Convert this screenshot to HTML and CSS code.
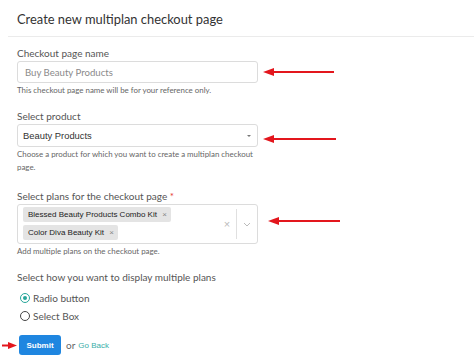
FILE: index.html
```html
<!DOCTYPE html>
<html lang="en">
<head>
<meta charset="utf-8">
<title>Create new multiplan checkout page</title>
<link rel="stylesheet" href="styles.css">
</head>
<body>
<div class="page">
  <h1 class="header">Create new multiplan checkout page</h1>
  <form class="form">
    <div class="group g1">
      <label class="label">Checkout page name</label>
      <div class="row">
        <div class="input"><span class="placeholder">Buy Beauty Products</span></div>
        <svg class="arrow a1" width="71" height="8" viewBox="0 0 71 8"><path d="M9 4H71" stroke="#e3161d" stroke-width="2"/><path d="M0 4L11 0V8Z" fill="#e3161d"/></svg>
      </div>
      <p class="help">This checkout page name will be for your reference only.</p>
    </div>

    <div class="group g2">
      <label class="label">Select product</label>
      <div class="row">
        <div class="select"><span class="select-text">Beauty Products</span><span class="caret"></span></div>
        <svg class="arrow a2" width="73" height="8" viewBox="0 0 73 8"><path d="M9 4H73" stroke="#e3161d" stroke-width="2"/><path d="M0 4L11 0V8Z" fill="#e3161d"/></svg>
      </div>
      <p class="help wrap">Choose a product for which you want to create a multiplan checkout page.</p>
    </div>

    <div class="group g3">
      <label class="label">Select plans for the checkout page <span class="req">*</span></label>
      <div class="row">
        <div class="multi">
          <div class="tags">
            <span class="tag">Blessed Beauty Products Combo Kit <span class="tag-x">×</span></span>
            <span class="tag">Color Diva Beauty Kit <span class="tag-x">×</span></span>
          </div>
          <div class="indicators">
            <span class="clear">×</span>
            <span class="sep"></span>
            <svg class="chev" width="8" height="5" viewBox="0 0 8 5"><path d="M1 1L4 4L7 1" fill="none" stroke="#bbb" stroke-width="1"/></svg>
          </div>
        </div>
        <svg class="arrow a3" width="72" height="8" viewBox="0 0 72 8"><path d="M9 4H72" stroke="#e3161d" stroke-width="2"/><path d="M0 4L11 0V8Z" fill="#e3161d"/></svg>
      </div>
      <p class="help">Add multiple plans on the checkout page.</p>
    </div>

    <div class="group g4">
      <label class="label">Select how you want to display multiple plans</label>
      <div class="radios">
        <div class="radio-row"><span class="radio checked"></span><span class="radio-label">Radio button</span></div>
        <div class="radio-row"><span class="radio"></span><span class="radio-label">Select Box</span></div>
      </div>
    </div>

    <div class="actions">
      <svg class="arrow a4" width="15" height="7" viewBox="0 0 15 7"><path d="M0 3.5H8" stroke="#e3161d" stroke-width="2"/><path d="M15 3.5L6 0V7Z" fill="#e3161d"/></svg>
      <button type="button" class="submit">Submit</button>
      <span class="or">or</span>
      <a class="back" href="#">Go Back</a>
    </div>
  </form>
</div>
</body>
</html>
```

FILE: styles.css
```css
html, body {
  margin: 0;
  padding: 0;
  background: #fff;
}
body {
  font-family: Lato, "Open Sans", sans-serif;
  color: #555;
}
.page {
  padding-left: 8px;
}
.header {
  margin: 0;
  padding: 10px 9px 8px;
  font-size: 12.9px;
  line-height: 18px;
  font-weight: 400;
  color: #333;
  border-bottom: 1px solid #ebebeb;
}
.form {
  padding: 10px 0 0 9px;
}
.group {
  display: flex;
  flex-direction: column;
}
.label {
  font-size: 10px;
  line-height: 13px;
  color: #555;
  margin-bottom: 1px;
}
.req {
  color: #e53935;
}
.row {
  display: flex;
  align-items: center;
}
.input, .select, .multi {
  box-sizing: border-box;
  width: 241px;
  border: 1px solid #dcdcdc;
  border-radius: 3px;
  background: #fff;
}
.input {
  height: 22px;
  display: flex;
  align-items: center;
  padding-left: 7px;
}
.placeholder {
  font-size: 9.6px;
  color: #8a8a8a;
}
.arrow {
  display: block;
  flex: none;
}
.a1 { margin-left: 5px; }
.a2 { margin-left: 5px; margin-top: 6px; }
.a3 { margin-left: 10px; margin-top: -7px; }
.help {
  margin: 2px 0 0;
  font-size: 7.9px;
  line-height: 11px;
  color: #666;
}
.help.wrap {
  width: 252px;
  line-height: 13px;
  margin-top: 1px;
}
.g2 { margin-top: 14px; }
.g3 { margin-top: 16px; }
.g4 { margin-top: 14px; }
.select {
  height: 23px;
  display: flex;
  align-items: center;
  justify-content: space-between;
  padding: 0 6px 0 5px;
}
.select-text {
  font-family: "Liberation Sans", Arial, sans-serif;
  font-size: 9.4px;
  color: #333;
}
.caret {
  width: 0;
  height: 0;
  border-left: 2.5px solid transparent;
  border-right: 2.5px solid transparent;
  border-top: 2.5px solid #777;
}
.multi {
  display: flex;
  align-items: stretch;
  min-height: 40px;
}
.tags {
  flex: 1;
  display: flex;
  flex-direction: column;
  align-items: flex-start;
  gap: 3px;
  padding: 2px 5px;
}
.tag {
  font-family: "Liberation Sans", Arial, sans-serif;
  font-size: 8px;
  line-height: 15px;
  color: #222;
  background: #e4e4e4;
  border-radius: 2px;
  padding: 0 4px 0 5px;
}
.tag-x {
  color: #888;
  font-size: 8px;
  margin-left: 3px;
}
.indicators {
  display: flex;
  align-items: center;
}
.clear {
  font-family: "Liberation Sans", Arial, sans-serif;
  color: #bbb;
  font-size: 11px;
  width: 18px;
  text-align: center;
}
.sep {
  width: 1px;
  align-self: stretch;
  margin: 4px 0;
  background: #e0e0e0;
}
.chev {
  display: block;
  margin: 0 6px 0 6px;
}
.radios {
  display: flex;
  flex-direction: column;
  padding-top: 4px;
}
.radio-row {
  display: flex;
  align-items: center;
  height: 18px;
  padding-left: 3px;
}
.radio {
  box-sizing: border-box;
  width: 10px;
  height: 10px;
  border: 1.5px solid #444;
  border-radius: 50%;
  margin-right: 3px;
  display: flex;
  align-items: center;
  justify-content: center;
}
.radio.checked {
  border-color: #26a69a;
}
.radio.checked::after {
  content: "";
  width: 4px;
  height: 4px;
  border-radius: 50%;
  background: #26a69a;
}
.radio-label {
  font-size: 10px;
  color: #555;
}
.actions {
  display: flex;
  align-items: center;
  margin-top: 10px;
  margin-left: -15px;
}
.submit {
  font-family: "Liberation Sans", Arial, sans-serif;
  font-weight: 700;
  font-size: 8px;
  color: #fff;
  background: #1f86e0;
  border: none;
  border-radius: 3px;
  height: 20px;
  width: 42px;
  padding: 0;
  margin-left: 2px;
}
.or {
  font-size: 10px;
  color: #666;
  margin-left: 5px;
}
.back {
  font-family: "Liberation Sans", Arial, sans-serif;
  font-size: 8px;
  color: #3aaea8;
  text-decoration: none;
  margin-left: 3px;
}
```
